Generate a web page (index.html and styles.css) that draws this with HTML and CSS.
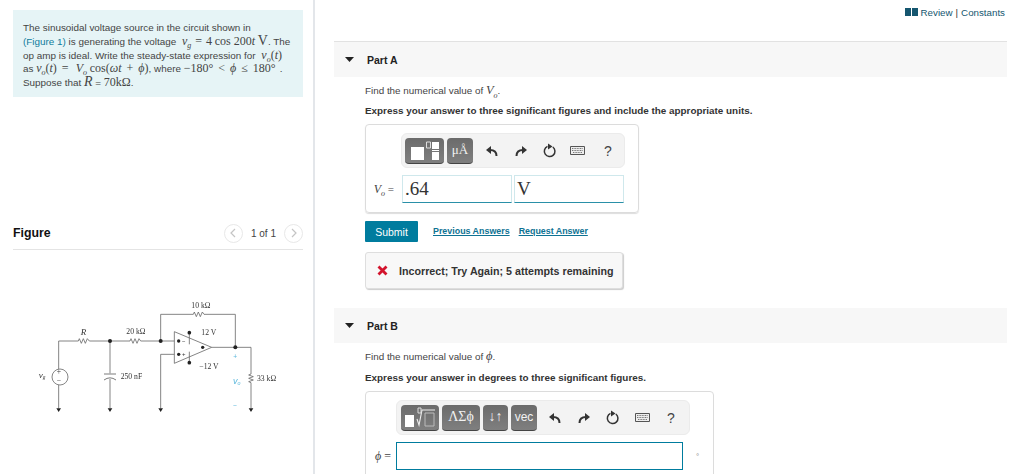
FILE: index.html
```html
<!DOCTYPE html>
<html lang="en">
<head>
<meta charset="utf-8">
<title>Part A and Part B</title>
<link rel="stylesheet" href="styles.css">
</head>
<body>
<div class="page">
  <aside class="left">
    <div class="intro">
      The sinusoidal voltage source in the circuit shown in<br>
      <a class="figlink">(Figure 1)</a> is generating the voltage <span class="m nudge">v<sub>g</sub></span><span class="mr op">=</span><span class="mr">4</span> <span class="mr">cos 200</span><span class="m">t</span> <span class="mr big">V</span>. The<br>
      op amp is ideal. Write the steady-state expression for <span class="m nudge">v<sub>o</sub></span><span class="mr">(</span><span class="m">t</span><span class="mr">)</span><br>
      as <span class="m">v<sub>o</sub></span><span class="mr">(</span><span class="m">t</span><span class="mr">)</span><span class="mr opw">=</span><span class="m nudge2">V<sub>o</sub></span> <span class="mr">cos(</span><span class="m">ωt</span><span class="mr opw">+</span><span class="m">ϕ</span><span class="mr">)</span>, where <span class="mr">−180°</span><span class="mr opw">&lt;</span><span class="m">ϕ</span><span class="mr opw">≤</span><span class="mr">180°</span><span class="dot">.</span><br>
      Suppose that <span class="m big">R</span> = <span class="mr">70</span><span class="mr">kΩ</span>.
    </div>
    <div class="fighead">
      <h2 class="figtitle">Figure</h2>
      <div class="pager">
        <span class="pagebtn"><svg width="6" height="10" viewBox="0 0 6 10"><path d="M5 1 1 5l4 4" fill="none" stroke="#c4c4c4" stroke-width="1.2"/></svg></span>
        <span class="pagetxt">1 of 1</span>
        <span class="pagebtn"><svg width="6" height="10" viewBox="0 0 6 10"><path d="M1 1l4 4-4 4" fill="none" stroke="#c4c4c4" stroke-width="1.2"/></svg></span>
      </div>
    </div>
    <svg class="circuit" width="260" height="125" viewBox="0 0 780 375">
      <g fill="none" stroke="#666" stroke-width="2.4">
        <path d="M86 222V138H145l3-7 6 14 6-14 6 14 6-14 6 7H300l3-7 6 14 6-14 6 14 6-14 5 7H433"/>
        <path d="M392 138V58H490l3-7 6 14 6-14 6 14 6-14 5 7H616V157"/>
        <path d="M240 138V235M240 252V340M86 270V340"/>
        <path d="M222 237H258M222 255Q240 242 258 255" stroke-width="2.6"/>
        <path d="M433 178H392V340"/>
        <path d="M433 110V205L545 157Z"/>
        <path d="M478 113V148M478 170V203"/>
        <path d="M545 157H663V237l-7 3 14 5-14 5 14 5-14 5 7 3V340"/>
        <circle cx="90" cy="246" r="24"/>
      </g>
      <g fill="#222">
        <circle cx="240" cy="138" r="6"/><circle cx="392" cy="138" r="6"/><circle cx="616" cy="157" r="6"/>
        <circle cx="446" cy="138" r="5"/><circle cx="446" cy="178" r="5"/><circle cx="478" cy="113" r="5.5"/><circle cx="478" cy="203" r="5.5"/><circle cx="518" cy="157" r="5"/>
        <path d="M79 340h14l-7 11zM233 340h14l-7 11zM385 340h14l-7 11zM656 340h14l-7 11z"/>
      </g>
      <g class="ctext">
        <text x="484" y="39">10 kΩ</text>
        <text x="289" y="118">20 kΩ</text>
        <text x="514" y="121">12 V</text>
        <text x="508" y="223">−12 V</text>
        <text x="272" y="253">250 nF</text>
        <text x="681" y="258">33 kΩ</text>
        <text class="cit" x="152" y="120">R</text>
        <text class="cit" x="26" y="250">v<tspan class="csub" dy="3">g</tspan></text>
        <text x="80" y="236">+</text>
        <text x="80" y="264">−</text>
        <text x="456" y="144" class="csm">−</text>
        <text x="456" y="184" class="csm">+</text>
      </g>
      <g class="cblue">
        <text x="610" y="191">+</text>
        <text class="cit" x="609" y="267">v<tspan class="csub" dy="3">o</tspan></text>
        <text x="610" y="338">−</text>
      </g>
    </svg>
  </aside>
  <main class="right">
    <div class="topbar">
      <svg class="bookicon" width="13" height="8" viewBox="0 0 13 8"><path d="M0 0h6v8H0zM7 0h6v8H7z" fill="#15566f"/></svg>
      <a class="review">Review</a><span class="sep">|</span><a class="review">Constants</a>
    </div>
    <section class="parta">
      <header class="parthead">
        <svg width="9" height="5" viewBox="0 0 9 5"><path d="M0 0h9L4.500 5z" fill="#222"/></svg>
        <span class="parttitle">Part A</span>
      </header>
      <div class="partbody">
        <p class="q">Find the numerical value of <span class="m qm">V<sub>o</sub></span>.</p>
        <p class="instr">Express your answer to three significant figures and include the appropriate units.</p>
        <div class="card carda">
          <div class="toolbar tba">
            <span class="tbtn bt1"><svg width="30" height="19" viewBox="0 0 30 19"><path d="M1 6h13v13H1z" fill="#fff"/><path d="M16.500 1h4v6h-4z" fill="none" stroke="#ddd"/><path d="M22 1h7v7h-7zM22 11h7v8h-7z" fill="#fff"/><path d="M22 9.500h7" stroke="#fff"/></svg></span>
            <span class="tbtn bt2">μÅ</span>
            <svg class="ti" width="14" height="12" viewBox="0 0 14 12"><path d="M6 1 1 5l5 4z" fill="#333"/><path d="M5 5c4 0 6.500 2 6.500 6" fill="none" stroke="#333" stroke-width="2"/></svg>
            <svg class="ti" width="14" height="12" viewBox="0 0 14 12"><path d="M8 1l5 4-5 4z" fill="#333"/><path d="M9 5c-4 0-6.500 2-6.500 6" fill="none" stroke="#333" stroke-width="2"/></svg>
            <svg class="ti" width="14" height="15" viewBox="0 0 14 15"><path d="M9.800 4a5.300 5.300 0 1 1-5.300-.6" fill="none" stroke="#333" stroke-width="1.500"/><path d="M5 .5l4.500 3L5 6.500z" fill="#333"/></svg>
            <svg class="ti kb" width="15" height="9" viewBox="0 0 15 9"><path d="M.5.500h14v8H.5z" fill="#eee" stroke="#555"/><path d="M2 2.500h11M2 4.500h11M3 6.500h9" stroke="#777" stroke-dasharray="1 .6"/></svg>
            <span class="ti help">?</span>
          </div>
          <div class="ansrow">
            <span class="anslabel"><span class="m">V<sub>o</sub></span> =</span>
            <span class="ansbox">.64</span>
            <span class="ansbox">V</span>
          </div>
        </div>
        <div class="actions">
          <button class="submit">Submit</button>
          <a class="alink">Previous Answers</a>
          <a class="alink">Request Answer</a>
        </div>
        <div class="feedback">
          <svg width="11" height="11" viewBox="0 0 11 11"><path d="M1.500 1.500l8 8M9.500 1.500l-8 8" stroke="#d3142d" stroke-width="2.800"/></svg>
          <span>Incorrect; Try Again; 5 attempts remaining</span>
        </div>
      </div>
    </section>
    <section class="partb">
      <header class="parthead">
        <svg width="9" height="5" viewBox="0 0 9 5"><path d="M0 0h9L4.500 5z" fill="#222"/></svg>
        <span class="parttitle">Part B</span>
      </header>
      <div class="partbody">
        <p class="q">Find the numerical value of <span class="m qm">ϕ</span>.</p>
        <p class="instr">Express your answer in degrees to three significant figures.</p>
        <div class="card cardb">
          <div class="toolbar tbb">
            <span class="tbtn b1"><svg width="32" height="21" viewBox="0 0 32 21"><path d="M1 8h9v12H1z" fill="#fff"/><path d="M13 12l2 6 3-15h13" fill="none" stroke="#eee" stroke-width="1.100"/><path d="M14 1h3v5h-3z" fill="none" stroke="#ddd"/><path d="M21 6h9v13h-9z" fill="none" stroke="#bbb"/></svg></span>
            <span class="tbtn b2">ΛΣϕ</span>
            <span class="tbtn b3">↓↑</span>
            <span class="tbtn b4">vec</span>
            <svg class="ti" width="14" height="12" viewBox="0 0 14 12"><path d="M6 1 1 5l5 4z" fill="#333"/><path d="M5 5c4 0 6.500 2 6.500 6" fill="none" stroke="#333" stroke-width="2"/></svg>
            <svg class="ti" width="14" height="12" viewBox="0 0 14 12"><path d="M8 1l5 4-5 4z" fill="#333"/><path d="M9 5c-4 0-6.500 2-6.500 6" fill="none" stroke="#333" stroke-width="2"/></svg>
            <svg class="ti" width="14" height="15" viewBox="0 0 14 15"><path d="M9.800 4a5.300 5.300 0 1 1-5.300-.6" fill="none" stroke="#333" stroke-width="1.500"/><path d="M5 .5l4.500 3L5 6.500z" fill="#333"/></svg>
            <svg class="ti kb" width="15" height="9" viewBox="0 0 15 9"><path d="M.5.500h14v8H.5z" fill="#eee" stroke="#555"/><path d="M2 2.500h11M2 4.500h11M3 6.500h9" stroke="#777" stroke-dasharray="1 .6"/></svg>
            <span class="ti help">?</span>
          </div>
          <div class="ansrow ansrowb">
            <span class="anslabel"><span class="m">ϕ</span> =</span>
            <span class="ansinput"></span>
            <span class="tiny">°</span>
          </div>
        </div>
      </div>
    </section>
  </main>
</div>
</body>
</html>
```

FILE: styles.css
```css
* { box-sizing: border-box; }
html, body { margin: 0; height: 100%; overflow: hidden; background: #fff; }
body { font-family: "Liberation Sans", Arial, sans-serif; color: #333; font-size: 10px; }
.page { display: flex; width: 1024px; height: 474px; overflow: hidden; }
.m { font-family: "Liberation Serif", serif; font-style: italic; font-size: 12px; }
.mr { font-family: "Liberation Serif", serif; font-size: 12px; }
.big { font-size: 14px; }
.op { margin: 0 4px; }
.opw { margin: 0 5px; }
.nudge { margin-left: 3px; }
.nudge2 { margin-left: 2px; }
.dot { margin-left: 4px; }
sub { font-size: 8px; line-height: 0; }

.left { width: 315px; flex: none; padding: 10px 10px 0 13px; border-right: 2px solid #e3e6ea; }
.intro { background: #e6f4f6; height: 87px; padding: 11px 10px; font-size: 9.900px; line-height: 13.300px; white-space: nowrap; color: #444; }
.figlink { color: #0e7c9c; }
.fighead { display: flex; justify-content: space-between; align-items: center; margin-top: 124px; height: 29px; border-bottom: 1px solid #e4e4e4; padding-bottom: 4px; }
.figtitle { margin: 0; font-size: 12.300px; font-weight: 700; color: #111; }
.pager { display: flex; align-items: center; gap: 8px; }
.pagebtn { width: 19px; height: 19px; border: 1px solid #e8e8e8; border-radius: 50%; display: flex; align-items: center; justify-content: center; }
.pagetxt { font-size: 10px; color: #444; }
.circuit { display: block; margin: 45px 0 0 17px; filter: blur(.35px); }
.ctext text { font-family: "Liberation Serif", serif; font-size: 23px; fill: #333; }
.ctext .cit, .cblue .cit { font-style: italic; font-size: 27px; }
.ctext .csm { font-family: "Liberation Sans", sans-serif; font-size: 18px; }
.csub { font-size: 16px; }
.cblue text { font-family: "Liberation Sans", sans-serif; font-size: 20px; fill: #5cb8dc; }

.right { flex: 1; min-width: 0; padding-left: 19px; padding-right: 17px; }
.topbar { height: 41px; display: flex; justify-content: flex-end; align-items: flex-start; padding: 7px 2px 0 0; font-size: 9.750px; gap: 3px; color: #333; }
.bookicon { margin: 1px 0 0 0; }
.parthead { height: 36px; background: #f7f7f7; border-top: 1px solid #e2e2e2; display: flex; align-items: center; padding-left: 11px; gap: 13px; }
.partb .parthead { height: 35px; border-top: 0; }
.review { color: #15566f; }
.parttitle { font-size: 10.500px; font-weight: 700; color: #222; }
.partbody { padding-left: 31px; }
.q { margin: 0; font-size: 9.850px; color: #444; line-height: 13px; padding-top: 7px; }
.qm { font-size: 12.500px; }
.instr { margin: 0; padding-top: 7px; font-size: 9.900px; font-weight: 700; color: #333; line-height: 13px; }
.partb .instr { padding-top: 8px; }
.card { border: 1px solid #dcdcdc; border-radius: 4px; }
.carda { width: 274px; height: 89px; margin-top: 7px; padding: 8px 0 0 35px; box-shadow: 0 1px 1px #ddd; }
.toolbar { display: flex; align-items: center; background: #f3f3f3; border: 1px solid #ebebeb; border-radius: 6px; height: 35px; }
.tba { width: 224px; padding-left: 3px; }
.tbb { width: 294px; padding-left: 3px; }
.tbtn { display: flex; align-items: center; justify-content: center; height: 26px; border-radius: 4px; background: linear-gradient(#6b6b6b, #7f7f7f); color: #f2f2f2; margin-right: 3px; border-bottom: 1px solid #444; font-family: "Liberation Serif", serif; font-size: 14px; }
.bt1 { width: 39px; }
.bt2 { width: 26px; font-size: 13px; }
.b1 { width: 38px; margin-left: 1px; }
.b2 { width: 38px; }
.b3 { width: 25px; }
.b4 { width: 26px; font-family: "Liberation Sans", sans-serif; font-size: 12px; }
.ti { flex: none; }
.tba .ti { margin-left: 15px; }
.tba .tbtn + .ti { margin-left: 9px; }
.tba .kb { margin-left: 13px; }
.tbb .ti { margin-left: 15px; }
.tbb .tbtn + .ti { margin-left: 8px; }
.tba .help { margin-left: 18px; }
.tbb .help { margin-left: 16px; }
.help { font-size: 14px; color: #444; width: 10px; text-align: center; }
.ansrow { display: flex; align-items: center; gap: 2px; margin: 7px 0 0 -28px; }
.anslabel { width: 27px; font-family: "Liberation Serif", serif; font-size: 11px; color: #444; text-align: right; padding-right: 6px; flex: none; white-space: nowrap; }
.ansbox { width: 110px; height: 28px; border: 1px solid #cfe8ec; border-bottom: 1px solid #2a90a8; font-family: "Liberation Serif", serif; font-size: 19px; color: #333; padding-left: 2px; line-height: 26px; }
.actions { display: flex; align-items: center; margin-top: 8px; }
.submit { width: 53px; height: 21px; background: #007c9e; color: #fff; border: 0; border-radius: 1px; font: 10.500px "Liberation Sans", sans-serif; margin-right: 15px; padding: 0; }
.alink { color: #0e7293; font-size: 8.900px; font-weight: 700; text-decoration: underline; margin: 0 9px 2px 0; }
.feedback { width: 258px; height: 37px; margin-top: 10px; background: #f8f8f8; border: 1px solid #dedede; border-radius: 3px; box-shadow: 1px 1px 1px #ccc; display: flex; align-items: center; gap: 11px; padding-left: 11px; font-size: 10.700px; font-weight: 700; color: #333; }
.partb { margin-top: 19px; }
.cardb { width: 349px; height: 110px; margin-top: 7px; padding: 8px 0 0 30px; }
.ansrowb { margin: 7px 0 0 -21px; }
.ansrowb .anslabel { width: 19px; padding-right: 4px; font-size: 12px; }
.ansinput { width: 287px; height: 28px; border: 1.500px solid #007c9e; }
.tiny { margin-left: 11px; font-size: 8px; color: #888; }
```
